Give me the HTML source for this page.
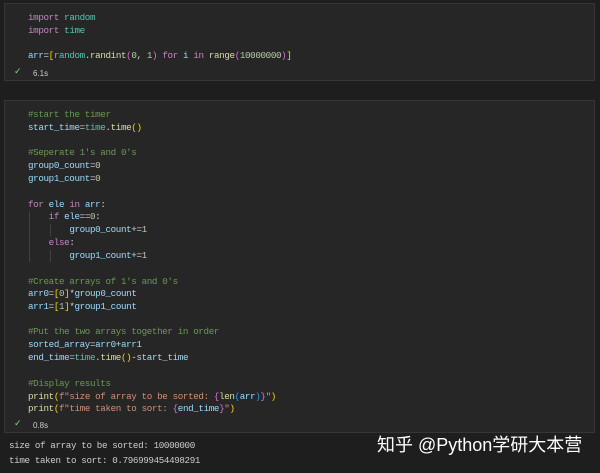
<!DOCTYPE html>
<html><head><meta charset="utf-8"><style>
html,body{margin:0;padding:0;}
body{width:600px;height:473px;background:#1e1e1e;position:relative;overflow:hidden;font-family:"Liberation Mono",monospace;font-size:9.2px;letter-spacing:-0.35px;color:#d4d4d4;}
.cell{position:absolute;left:4px;width:591px;background:#262626;border:1px solid #363636;box-sizing:border-box;}
.l{position:absolute;left:28px;white-space:pre;line-height:12px;height:12px;}
.o{position:absolute;left:9px;white-space:pre;line-height:12px;color:#cccccc;}
.k{color:#c586c0}.m{color:#4ec9b0}.v{color:#9cdcfe}.f{color:#dcdcaa}.n{color:#b5cea8}.c{color:#6a9955}.s{color:#ce9178}.b{color:#ffd700}.p{color:#da70d6}.bl{color:#179fff}
.chk{position:absolute;left:14px;color:#89d185;font-family:"DejaVu Sans",sans-serif;font-size:9px;letter-spacing:0;}
.t{position:absolute;left:33px;font-family:"Liberation Sans",sans-serif;font-size:8px;letter-spacing:0;color:#cccccc;}
.g{position:absolute;width:1px;background:#404040;}
.wm{position:absolute;left:377px;top:431px;font-family:"Liberation Sans","Noto Sans CJK SC",sans-serif;font-size:18px;letter-spacing:0;color:#fff;white-space:nowrap;}
</style></head><body>
<div class="cell" style="top:3px;height:78px;"></div>
<div class="cell" style="top:100px;height:333px;"></div>

<div class="l" style="top:12px"><span class="k">import</span> <span class="m">random</span></div>
<div class="l" style="top:25px"><span class="k">import</span> <span class="m">time</span></div>
<div class="l" style="top:50px"><span class="v">arr</span>=<span class="b">[</span><span class="m">random</span>.<span class="f">randint</span><span class="p">(</span><span class="n">0</span>, <span class="n">1</span><span class="p">)</span> <span class="k">for</span> <span class="v">i</span> <span class="k">in</span> <span class="f">range</span><span class="p">(</span><span class="n">10000000</span><span class="p">)</span><span class="b">]</span></div>
<div class="chk" style="top:67px">✓</div><div class="t" style="top:69px">6.1s</div>

<div class="l" style="top:109px"><span class="c">#start the timer</span></div>
<div class="l" style="top:122px"><span class="v">start_time</span>=<span class="m">time</span>.<span class="f">time</span><span class="b">()</span></div>
<div class="l" style="top:147px"><span class="c">#Seperate 1's and 0's</span></div>
<div class="l" style="top:160px"><span class="v">group0_count</span>=<span class="n">0</span></div>
<div class="l" style="top:173px"><span class="v">group1_count</span>=<span class="n">0</span></div>
<div class="l" style="top:199px"><span class="k">for</span> <span class="v">ele</span> <span class="k">in</span> <span class="v">arr</span>:</div>
<div class="l" style="top:211px">    <span class="k">if</span> <span class="v">ele</span>==<span class="n">0</span>:</div>
<div class="l" style="top:224px">        <span class="v">group0_count</span>+=<span class="n">1</span></div>
<div class="l" style="top:237px">    <span class="k">else</span>:</div>
<div class="l" style="top:250px">        <span class="v">group1_count</span>+=<span class="n">1</span></div>
<div class="g" style="left:29px;top:211px;height:51px"></div>
<div class="g" style="left:50px;top:224px;height:12px"></div>
<div class="g" style="left:50px;top:250px;height:12px"></div>
<div class="l" style="top:276px"><span class="c">#Create arrays of 1's and 0's</span></div>
<div class="l" style="top:288px"><span class="v">arr0</span>=<span class="b">[</span><span class="n">0</span><span class="b">]</span>*<span class="v">group0_count</span></div>
<div class="l" style="top:301px"><span class="v">arr1</span>=<span class="b">[</span><span class="n">1</span><span class="b">]</span>*<span class="v">group1_count</span></div>
<div class="l" style="top:326px"><span class="c">#Put the two arrays together in order</span></div>
<div class="l" style="top:339px"><span class="v">sorted_array</span>=<span class="v">arr0</span>+<span class="v">arr1</span></div>
<div class="l" style="top:352px"><span class="v">end_time</span>=<span class="m">time</span>.<span class="f">time</span><span class="b">()</span>-<span class="v">start_time</span></div>
<div class="l" style="top:378px"><span class="c">#Display results</span></div>
<div class="l" style="top:391px"><span class="f">print</span><span class="b">(</span><span class="s">f"size of array to be sorted: </span><span class="p">{</span><span class="f">len</span><span class="bl">(</span><span class="v">arr</span><span class="bl">)</span><span class="p">}</span><span class="s">"</span><span class="b">)</span></div>
<div class="l" style="top:403px"><span class="f">print</span><span class="b">(</span><span class="s">f"time taken to sort: </span><span class="p">{</span><span class="v">end_time</span><span class="p">}</span><span class="s">"</span><span class="b">)</span></div>
<div class="chk" style="top:419px">✓</div><div class="t" style="top:421px">0.8s</div>

<div class="o" style="top:440px">size of array to be sorted: 10000000</div>
<div class="o" style="top:455px">time taken to sort: 0.796999454498291</div>
<div class="wm">知乎 @Python学研大本营</div>
</body></html>
